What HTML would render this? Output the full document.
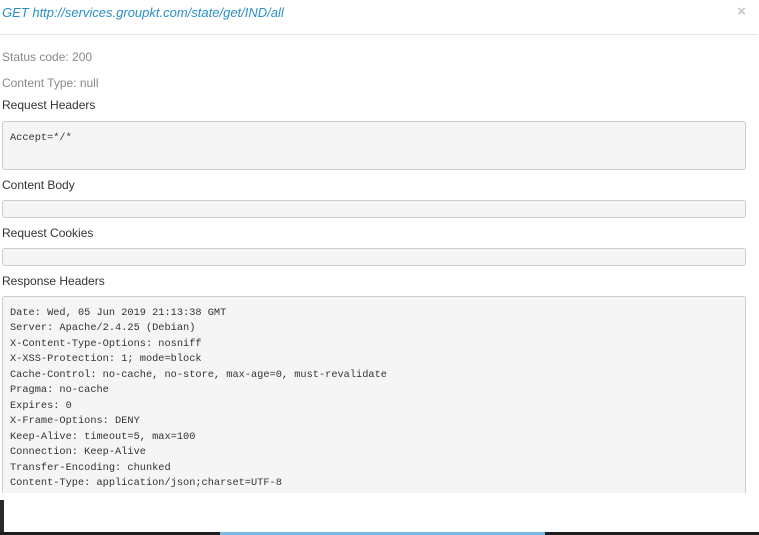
<!DOCTYPE html>
<html><head><style>
body{margin:0;width:759px;height:535px;overflow:hidden;background:#fff;position:relative;font-family:"Liberation Sans",Arial,sans-serif;}
.t{position:absolute;left:2px;font-size:12px;color:#333;}
.g{color:#888;}
.box{position:absolute;left:2px;width:742px;background:#f5f5f5;border:1px solid #ccc;border-radius:3px;}
pre{margin:0;font-family:"Liberation Mono",monospace;font-size:10.3px;line-height:15.45px;color:#333;padding:0 7px;}
</style></head><body>
<div style="position:absolute;left:2px;top:5px;font-size:13px;font-style:italic;color:#2a8fc8">GET http://services.groupkt.com/state/get/IND/all</div>
<div style="position:absolute;right:13px;top:3px;font-size:15px;font-weight:bold;color:#c8c8c8">×</div>
<div style="position:absolute;left:0;top:34px;width:758px;height:1px;background:#e5e5e5"></div>
<div class="t g" style="top:50px">Status code: 200</div>
<div class="t g" style="top:76px">Content Type: null</div>
<div class="t" style="top:98px">Request Headers</div>
<div class="box" style="top:121px;height:47px"><pre style="padding-top:9px">Accept=*/*</pre></div>
<div class="t" style="top:178px">Content Body</div>
<div class="box" style="top:200px;height:16px"></div>
<div class="t" style="top:226px">Request Cookies</div>
<div class="box" style="top:248px;height:16px"></div>
<div class="t" style="top:274px">Response Headers</div>
<div class="box" style="top:296px;height:210px;border-bottom:none"><pre style="padding-top:9px">Date: Wed, 05 Jun 2019 21:13:38 GMT
Server: Apache/2.4.25 (Debian)
X-Content-Type-Options: nosniff
X-XSS-Protection: 1; mode=block
Cache-Control: no-cache, no-store, max-age=0, must-revalidate
Pragma: no-cache
Expires: 0
X-Frame-Options: DENY
Keep-Alive: timeout=5, max=100
Connection: Keep-Alive
Transfer-Encoding: chunked
Content-Type: application/json;charset=UTF-8</pre></div>
<div style="position:absolute;left:0;top:493px;width:759px;height:39px;background:#fff"></div>
<div style="position:absolute;left:0;top:500px;width:4px;height:35px;background:#2b2b2b"></div>
<div style="position:absolute;left:0;top:532px;width:759px;height:3px;background:#1e1e1e"></div>
<div style="position:absolute;left:220px;top:532px;width:325px;height:3px;background:#7ab8e6"></div>
</body></html>
